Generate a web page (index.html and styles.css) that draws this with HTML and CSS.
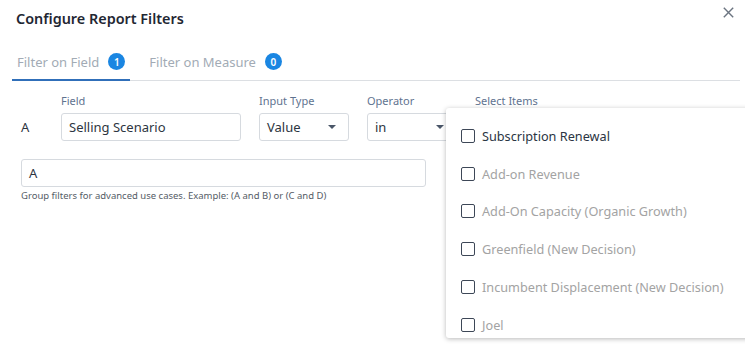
FILE: index.html
```html
<!DOCTYPE html>
<html lang="en">
<head>
<meta charset="utf-8">
<title>Configure Report Filters</title>
<link rel="stylesheet" href="styles.css">
</head>
<body>
<div class="modal">
  <header class="modal-header">
    <h1 class="modal-title">Configure Report Filters</h1>
    <button class="close-btn" aria-label="Close">
      <svg width="11" height="11" viewBox="0 0 11 11"><path d="M0.8 0.8 L10.2 10.2 M10.2 0.8 L0.8 10.2" stroke="#6b7480" stroke-width="1.4" fill="none"/></svg>
    </button>
  </header>

  <nav class="tabs">
    <div class="tab active">Filter on Field <span class="badge">1</span></div>
    <div class="tab">Filter on Measure <span class="badge">0</span></div>
  </nav>

  <section class="filter-body">
    <div class="filter-row">
      <div class="row-letter">A</div>
      <div class="col col-field">
        <label class="col-label">Field</label>
        <div class="control">Selling Scenario</div>
      </div>
      <div class="col col-type">
        <label class="col-label">Input Type</label>
        <div class="control select">Value <span class="caret"></span></div>
      </div>
      <div class="col col-op">
        <label class="col-label">Operator</label>
        <div class="control select">in <span class="caret"></span></div>
      </div>
      <div class="col col-items">
        <label class="col-label">Select Items</label>
        <div class="dropdown">
          <div class="item dark"><span class="check"></span>Subscription Renewal</div>
          <div class="item"><span class="check"></span>Add-on Revenue</div>
          <div class="item"><span class="check"></span>Add-On Capacity (Organic Growth)</div>
          <div class="item"><span class="check"></span>Greenfield (New Decision)</div>
          <div class="item"><span class="check"></span>Incumbent Displacement (New Decision)</div>
          <div class="item"><span class="check"></span>Joel</div>
        </div>
      </div>
    </div>

    <div class="group-input control">A</div>
    <p class="helper">Group filters for advanced use cases. Example: (A and B) or (C and D)</p>
  </section>
</div>
</body>
</html>
```

FILE: styles.css
```css
* { box-sizing: border-box; }
html, body {
  margin: 0;
  padding: 0;
  background: #fff;
  font-family: "Noto Sans", "Open Sans", sans-serif;
  color: #2d3541;
}
.modal {
  width: 745px;
  height: 344px;
  overflow: hidden;
}
.modal-header {
  display: flex;
  justify-content: space-between;
  align-items: flex-start;
  padding: 9px 11px 0 16px;
}
.modal-title {
  margin: 0;
  font-size: 14.4px;
  line-height: 20px;
  font-weight: 600;
  color: #1f2733;
}
.close-btn {
  border: 0;
  background: none;
  padding: 0;
  margin-top: -2px;
  width: 11px;
  height: 11px;
  display: flex;
}
.tabs {
  display: flex;
  gap: 14px;
  margin: 14px 5px 0 12px;
  border-bottom: 1px solid #dcdfe3;
}
.tab {
  display: flex;
  align-items: center;
  gap: 9px;
  height: 38px;
  padding: 1px 5px 0;
  margin-bottom: -1px;
  border-bottom: 2px solid transparent;
  font-size: 13px;
  color: #a2abb5;
}
.tab.active {
  border-bottom-color: #306fb9;
}
.badge {
  width: 17px;
  height: 17px;
  border-radius: 50%;
  background: #1a86e2;
  color: #fff;
  font-size: 10px;
  font-weight: 600;
  display: flex;
  align-items: center;
  justify-content: center;
}
.filter-body {
  padding: 13px 0 0 21px;
}
.filter-row {
  display: flex;
  align-items: flex-end;
  gap: 18px;
}
.row-letter {
  width: 22px;
  height: 28px;
  line-height: 28px;
  font-size: 13px;
  color: #2d3541;
}
.col {
  display: flex;
  flex-direction: column;
  gap: 5px;
}
.col-field { width: 180px; }
.col-type, .col-op { width: 90px; }
.col-items {
  position: relative;
  width: 200px;
  align-self: flex-start;
}
.col-label {
  font-size: 11px;
  line-height: 14px;
  color: #5f7390;
}
.control {
  height: 28px;
  border: 1px solid #d6dadf;
  border-radius: 3px;
  padding: 0 7px;
  font-size: 13px;
  line-height: 26px;
  color: #2d3541;
  background: #fff;
}
.select {
  display: flex;
  justify-content: space-between;
  align-items: center;
  padding-right: 12px;
}
.caret {
  width: 0;
  height: 0;
  border-left: 4px solid transparent;
  border-right: 4px solid transparent;
  border-top: 4px solid #4a5668;
}
.col-items .col-label { height: 14px; }
.dropdown {
  position: absolute;
  top: 14px;
  left: -29px;
  width: 320px;
  height: 230px;
  overflow: hidden;
  background: #fff;
  border-radius: 3px;
  box-shadow: 0 1px 5px rgba(0, 0, 0, 0.28);
  padding-top: 9px;
}
.item {
  display: flex;
  align-items: center;
  gap: 7px;
  height: 37.8px;
  padding-left: 15px;
  font-size: 12.7px;
  color: #a3a3a3;
}
.item.dark { color: #2b3543; }
.check {
  width: 14px;
  height: 14px;
  border: 1.5px solid #3d4757;
  border-radius: 2px;
  flex: none;
}
.group-input {
  width: 405px;
  margin-top: 18px;
  font-size: 13px;
}
.helper {
  margin: 3px 0 0;
  font-size: 9.5px;
  line-height: 12px;
  color: #555c66;
}
```
